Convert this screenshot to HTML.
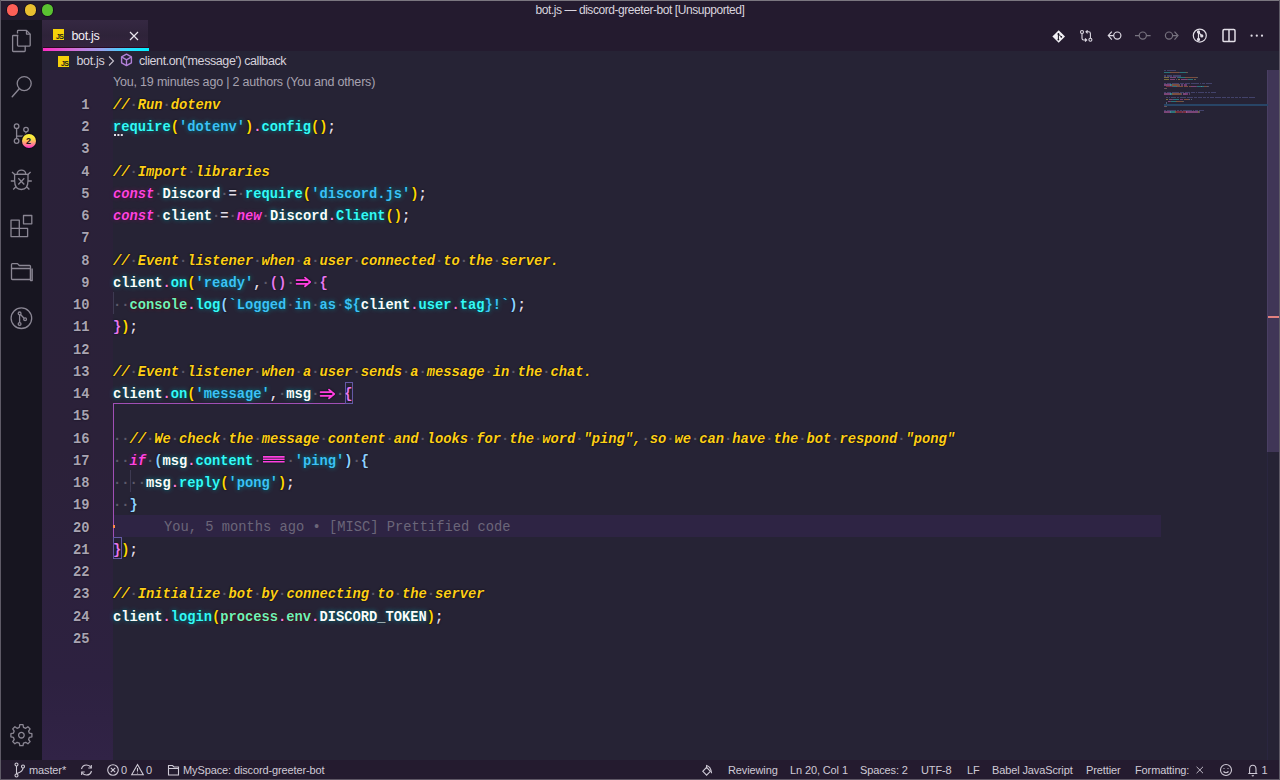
<!DOCTYPE html>
<html><head><meta charset="utf-8">
<style>
*{margin:0;padding:0;box-sizing:border-box}
html,body{width:1280px;height:780px;overflow:hidden;background:#262335;font-family:"Liberation Sans",sans-serif}
.abs{position:absolute}
svg{overflow:visible}
#title{left:0;top:0;width:1280px;height:51px;background:#241b2f}
#ttxt{left:0;top:3px;width:1280px;text-align:center;color:#d9d4de;font-size:12px;letter-spacing:-0.44px;line-height:14px}
.tl{width:11.4px;height:11.4px;border-radius:50%;top:4.3px;box-shadow:0 0 0 0.8px #150f1c}
#act{left:0;top:20px;width:42px;height:740px;background:#171520}
#tab{left:42px;top:20px;width:106px;height:31px;background:linear-gradient(#352842,#2e2339 50%,#36243f)}
#tabline{left:42.5px;top:48px;width:106px;height:3px;background:linear-gradient(90deg,#ff2ec4,#d070d8 30%,#9aa0ec 55%,#30dcff 80%,#00f0ff);box-shadow:0 -1px 0 #2a0a22}
.jsico{width:11px;height:11px;background:#f5d10a;color:#1a1a1a;font-size:7px;font-weight:bold;line-height:6px;text-align:right;padding-top:4.5px;padding-right:0.5px;letter-spacing:-0.5px}
#gutter{left:42px;top:70px;width:71px;height:690px;background:linear-gradient(#2a2139,#2b2139 55%,#2d2140 88%,#312346)}
#status{left:0;top:760px;width:1280px;height:20px;background:#241b2f}
.sb{position:absolute;top:760px;height:20px;line-height:20px;color:#cfcad6;font-size:11px;letter-spacing:-0.12px;white-space:pre}
.ln{position:absolute;left:42px;width:47.5px;height:22.25px;line-height:22.25px;text-align:right;font-family:"Liberation Mono",monospace;font-size:13.76px;font-weight:bold;color:#a9a4b2;text-shadow:0 0 2px #100c18}
.cl{position:absolute;left:113px;height:22.25px;line-height:22.25px;white-space:pre;font-family:"Liberation Mono",monospace;font-size:13.76px;font-weight:bold}
.cm{color:#fdcf17;font-style:italic;text-shadow:0 0 1px #0c0a14,0 0 2px #0c0a14}
.ws{color:#5d5a6a;text-shadow:none;font-style:normal;font-weight:bold}
.w{color:#fbfbfb;text-shadow:0 0 1px #00343a,0 0 2px #00464d,0 0 5px #03edf977}
.cy{color:#36f9f6;text-shadow:0 0 1px #00343a,0 0 2px #00464d,0 0 5px #03edf977}
.st{color:#3fc0f5;text-shadow:0 0 1px #00343a,0 0 2px #00464d,0 0 5px #03edf977}
.y{color:#ffd700;text-shadow:0 0 2px #0c0a14}
.pk{color:#ff44e0;font-style:italic;text-shadow:0 0 1px #100c0f,0 0 4px #dc078e66}
.pd{color:#ff7edb;text-shadow:0 0 2px #0c0a14}
.or{color:#e878f0;text-shadow:0 0 2px #0c0a14}
.lb{color:#8fd3ff;text-shadow:0 0 2px #0c0a14}
.gr{color:#72f1b8;text-shadow:0 0 1px #100c0f,0 0 2px #3a0a14,0 0 4px #fc1f2c55}
.sc{color:#e0dbe6;text-shadow:0 0 2px #0c0a14}
.sp{}
.ic{position:absolute}
.ic path,.ic circle,.ic rect,.ic line{vector-effect:non-scaling-stroke}
</style></head><body>
<!-- title bar -->
<div id="title" class="abs"></div>
<div class="abs" style="left:0;top:0;width:1280px;height:1px;background:#7b7780"></div>
<div id="ttxt" class="abs">bot.js — discord-greeter-bot [Unsupported]</div>
<div class="abs tl" style="left:6.6px;background:#fe5f57"></div>
<div class="abs tl" style="left:24.5px;background:#e9bf30"></div>
<div class="abs tl" style="left:42.1px;background:#5ac231"></div>

<!-- activity bar -->
<div id="act" class="abs"></div>
<svg class="ic" style="left:0;top:20px" width="42" height="740" viewBox="0 20 42 740">
 <g fill="none" stroke="#8a8693" stroke-width="1.3" stroke-linejoin="round">
  <!-- explorer -->
  <path d="M17.5 33.5V31.2Q17.5 30.4 18.3 30.4H26.5L30.2 34.1V45.3Q30.2 46.1 29.4 46.1H25.2"/>
  <path d="M26.5 30.4V34.1H30.2"/>
  <path d="M12.6 36.2Q12.6 35.5 13.3 35.5H17.5V45.3Q17.5 46.1 18.3 46.1H25.2V50.8Q25.2 51.5 24.5 51.5H13.3Q12.6 51.5 12.6 50.8Z"/>
  <path d="M17.5 35.5H18.3"/>
  <!-- search -->
  <circle cx="24.2" cy="83.6" r="7"/>
  <path d="M19.2 88.8L12.2 96.8" stroke-width="1.4" stroke-linecap="round"/>
  <!-- scm -->
  <circle cx="16.6" cy="126.2" r="2.3"/>
  <circle cx="26" cy="129.6" r="2.3"/>
  <circle cx="16.6" cy="141" r="2.3"/>
  <path d="M16.6 128.5V138.7M26 131.9V132.5Q26 136.2 21.5 136.2H16.6"/>
  <!-- debug -->
  <path d="M17.1 174.4A4.35 4.35 0 0 1 25.8 174.4Z"/>
  <path d="M14.6 174.4H28V180.5Q28 189.5 21.3 189.5Q14.6 189.5 14.6 180.5Z"/>
  <path d="M12 172L15.2 175M30.6 172L27.4 175M10.8 181H14.6M28 181H31.8M13.2 189.5L16.2 186.5M29.4 189.5L26.4 186.5"/>
  <path d="M18.3 178.3L24.3 184.5M24.3 178.3L18.3 184.5"/>
  <!-- extensions -->
  <path d="M11 220.2H19.3V236.6H11ZM11 228.4H27.6V236.6H19.3"/>
  <path d="M23.5 215.5H31.8V223.8H23.5Z"/>
  <!-- folder -->
  <path d="M11.5 264.5Q11.5 263.6 12.4 263.6H17.5L19.3 265.5H29.6Q30.5 265.5 30.5 266.4V278.6Q30.5 279.5 29.6 279.5H12.4Q11.5 279.5 11.5 278.6Z"/>
  <path d="M11.5 268.5H30.5M30.5 268.5V280.5H32.2V268.5"/>
  <!-- git graph -->
  <circle cx="21.4" cy="318.2" r="10.3"/>
  <circle cx="19.6" cy="313.4" r="1.4"/>
  <circle cx="19.6" cy="324" r="1.4"/>
  <circle cx="25.1" cy="319.3" r="1.4"/>
  <path d="M19.6 314.8V322.6M20.5 314.5L24.1 318.3"/>
  <!-- gear -->
  <g transform="translate(21.4 735.2)">
   <path d="M-1.6 -9.5H1.6L2.1 -6.9L4.3 -5.9L6.5 -7.5L8.7 -5.3L7.2 -3.1L8 -1L10.5 -0.5V2.6L8 3.1L7.2 5.3L8.7 7.4L6.5 9.6L4.3 8.1L2.1 9L1.6 11.5H-1.6L-2.1 9L-4.3 8.1L-6.5 9.6L-8.7 7.4L-7.2 5.3L-8 3.1L-10.5 2.6V-0.5L-8 -1L-7.2 -3.1L-8.7 -5.3L-6.5 -7.5L-4.3 -5.9L-2.1 -6.9Z" transform="translate(0 -1)"/>
   <circle cx="0" cy="0" r="2.8"/>
  </g>
 </g>
</svg>
<!-- scm badge -->
<div class="abs" style="left:21.5px;top:133.5px;width:14px;height:14px;border-radius:50%;background:linear-gradient(#f8f23c,#fbe040 35%,#ff8a8a 70%,#ff2ec4);box-shadow:0 0 0 1.2px #120e1a;color:#1a1320;font-size:9px;font-weight:bold;line-height:14px;text-align:center">2</div>

<!-- tab -->
<div id="tab" class="abs"></div>
<div id="tabline" class="abs"></div>
<div class="abs jsico" style="left:53px;top:29px">JS</div>
<div class="abs" style="left:71.5px;top:28px;color:#f3f0f5;font-size:12.5px;letter-spacing:-0.35px;line-height:16px">bot.js</div>
<svg class="abs" style="left:129px;top:31px" width="10" height="10"><path d="M1 1L9 9M9 1L1 9" stroke="#e9e6ee" stroke-width="1.2"/></svg>

<!-- editor toolbar icons -->
<svg class="abs" style="left:1040px;top:20px" width="240" height="31" viewBox="1040 20 240 31">
 <!-- git diamond -->
 <path d="M1058.7 30.2L1065 36.5L1058.7 42.8L1052.4 36.5Z" fill="#f2f0f5"/>
 <g stroke="#171320" stroke-width="1" fill="none"><path d="M1058.4 33.9V39.6M1058.4 34L1061.2 36.8"/></g>
 <g fill="#171320"><circle cx="1058.4" cy="33.9" r="0.9"/><circle cx="1058.4" cy="39.6" r="0.9"/><circle cx="1061.3" cy="36.8" r="0.9"/></g>
 <g fill="none" stroke="#dcd8e2" stroke-width="1.1">
  <!-- compare -->
  <circle cx="1082" cy="32" r="1.5"/><circle cx="1090.4" cy="39.8" r="1.5"/>
  <path d="M1082 33.5V38.2Q1082 40 1083.8 40H1086.5M1085 38.5L1086.7 40L1085 41.5M1090.4 38.3V33.6Q1090.4 31.8 1088.6 31.8H1086.2M1087.6 30.3L1086 31.8L1087.6 33.3"/>
  </g><g fill="none" stroke="#dcd8e2" stroke-width="1.2" transform="translate(0.8 -0.9)">
  <!-- prev change -->
  <circle cx="1116.5" cy="36.5" r="3.6"/>
  <path d="M1112.9 36.5H1108M1111 32.5L1107.5 36.5L1111 40.5"/>
 </g>
 <g fill="none" stroke="#77737f" stroke-width="1.2" transform="translate(0 -0.9)">
  <circle cx="1142.8" cy="36.5" r="3.6"/>
  <path d="M1135 36.5H1139.2M1146.4 36.5H1150.6"/>
  <circle cx="1169" cy="36.5" r="3.6"/>
  <path d="M1172.6 36.5H1177M1174.5 32.5L1178 36.5L1174.5 40.5"/>
 </g>
 <g fill="none" stroke="#e2dee7" stroke-width="1.2" transform="translate(0 -0.9)">
  <circle cx="1199.8" cy="36.5" r="6.5"/>
  <path d="M1198.5 32.5V40.5M1198.5 33L1201.5 36.5"/>
  <circle cx="1198.5" cy="32.8" r="1" fill="#e2dee7"/><circle cx="1198.5" cy="40.3" r="1" fill="#e2dee7"/><circle cx="1201.8" cy="36.8" r="1" fill="#e2dee7"/>
  <rect x="1223" y="30.5" width="12" height="12" rx="1.2" stroke-width="1.5"/>
  <path d="M1229 30.5V42.5" stroke-width="1.5"/>
 </g>
 <g fill="#e2dee7"><circle cx="1251.6" cy="35.7" r="1.1"/><circle cx="1256.8" cy="35.7" r="1.1"/><circle cx="1262" cy="35.7" r="1.1"/></g>
</svg>

<!-- breadcrumb -->
<div class="abs jsico" style="left:58px;top:56px">JS</div>
<div class="abs" style="left:76.5px;top:53px;color:#d6d2dc;font-size:12.5px;letter-spacing:-0.35px;line-height:16px">bot.js</div>
<svg class="abs" style="left:107px;top:55px" width="8" height="12"><path d="M2 1.5L6.5 6L2 10.5" stroke="#c9c5cf" stroke-width="1.1" fill="none"/></svg>
<svg class="abs" style="left:119px;top:53.3px" width="15" height="15" viewBox="0 0 15 15"><g fill="none" stroke="#b180d7" stroke-width="1.4" stroke-linejoin="round"><path d="M7.5 1.2L12.4 3.9V9.8L7.5 12.6L2.6 9.8V3.9Z"/><path d="M2.6 3.9L7.5 6.8L12.4 3.9M7.5 6.8V12.6"/></g></svg>
<div class="abs" style="left:139px;top:53px;color:#d6d2dc;font-size:12.5px;letter-spacing:-0.41px;line-height:16px">client.on('message') callback</div>

<!-- gutter -->
<div id="gutter" class="abs"></div>

<!-- codelens -->
<div class="abs" style="left:113px;top:74px;color:#a7a2b0;font-size:12.5px;line-height:16px;letter-spacing:-0.19px">You, 19 minutes ago | 2 authors (You and others)</div>

<!-- line 20 highlight -->
<div class="abs" style="left:114px;top:515px;width:1047px;height:22px;background:#2e2444"></div>
<div class="abs" style="left:164px;top:517px;height:22.25px;line-height:22.25px;font-family:'Liberation Mono',monospace;font-size:13.76px;color:#6b6679;white-space:pre">You, 5 months ago • [MISC] Prettified code</div>

<!-- indent guides -->
<div class="abs" style="left:113px;top:292px;width:1px;height:22px;background:#3e3a52"></div>
<div class="abs" style="left:130px;top:470px;width:1px;height:22px;background:#3e3a52"></div>
<!-- bracket pair guide -->
<div class="abs" style="left:113px;top:403px;width:232px;height:1px;background:#a04fb5"></div>
<div class="abs" style="left:113px;top:403px;width:1px;height:134px;background:#a04fb5"></div>
<!-- bracket match boxes -->
<div class="abs" style="left:344.5px;top:381.5px;width:8px;height:22.5px;border:1px solid #6559a6"></div>
<div class="abs" style="left:113px;top:537px;width:8.5px;height:22px;border:1px solid #6559a6"></div>
<!-- cursor mark -->
<div class="abs" style="left:113px;top:524.5px;width:2px;height:3px;background:#ff8b4a"></div>
<!-- hint dots under require -->
<div class="abs" style="left:113.8px;top:134.3px;width:1.8px;height:1.8px;background:#e6e2ea;box-shadow:3.4px 0 #e6e2ea,6.8px 0 #e6e2ea"></div>

<div class="ln" style="top:94.75px">1</div>
<div class="cl" style="top:94.75px"><span class="cm">//<span class="ws">·</span>Run<span class="ws">·</span>dotenv</span></div>
<div class="ln" style="top:117.00px">2</div>
<div class="cl" style="top:117.00px"><span class="cy">require</span><span class="y">(</span><span class="st">'dotenv'</span><span class="y">)</span><span class="pd">.</span><span class="cy">config</span><span class="y">()</span><span class="sc">;</span></div>
<div class="ln" style="top:139.25px">3</div>
<div class="ln" style="top:161.50px">4</div>
<div class="cl" style="top:161.50px"><span class="cm">//<span class="ws">·</span>Import<span class="ws">·</span>libraries</span></div>
<div class="ln" style="top:183.75px">5</div>
<div class="cl" style="top:183.75px"><span class="pk">const</span><span class="ws">·</span><span class="w">Discord</span><span class="ws">·</span><span class="sc">=</span><span class="ws">·</span><span class="cy">require</span><span class="y">(</span><span class="st">'discord.js'</span><span class="y">)</span><span class="sc">;</span></div>
<div class="ln" style="top:206.00px">6</div>
<div class="cl" style="top:206.00px"><span class="pk">const</span><span class="ws">·</span><span class="w">client</span><span class="ws">·</span><span class="sc">=</span><span class="ws">·</span><span class="pk">new</span><span class="ws">·</span><span class="w">Discord</span><span class="pd">.</span><span class="cy">Client</span><span class="y">()</span><span class="sc">;</span></div>
<div class="ln" style="top:228.25px">7</div>
<div class="ln" style="top:250.50px">8</div>
<div class="cl" style="top:250.50px"><span class="cm">//<span class="ws">·</span>Event<span class="ws">·</span>listener<span class="ws">·</span>when<span class="ws">·</span>a<span class="ws">·</span>user<span class="ws">·</span>connected<span class="ws">·</span>to<span class="ws">·</span>the<span class="ws">·</span>server.</span></div>
<div class="ln" style="top:272.75px">9</div>
<div class="cl" style="top:272.75px"><span class="w">client</span><span class="pd">.</span><span class="cy">on</span><span class="y">(</span><span class="st">'ready'</span><span class="sc">,</span><span class="ws">·</span><span class="or">()</span><span class="ws">·</span><span class="sp">  </span><span class="ws">·</span><span class="or">{</span></div>
<svg class="abs" style="left:294.63px;top:270.25px;filter:drop-shadow(0 0 1px #0a0610)" width="17" height="22" viewBox="0 0 17 22"><g stroke="#ff3fe0" stroke-width="1.8" fill="none" stroke-linecap="round" stroke-linejoin="round"><path d="M1.6 10.05H13M1.6 13.85H13M10 7.6L15.2 11.95L10 16.3"/></g></svg>
<div class="ln" style="top:295.00px">10</div>
<div class="cl" style="top:295.00px"><span class="ws">··</span><span class="gr">console</span><span class="pd">.</span><span class="cy">log</span><span class="lb">(</span><span class="st">`Logged</span><span class="ws">·</span><span class="st">in</span><span class="ws">·</span><span class="st">as</span><span class="ws">·</span><span class="st">${</span><span class="w">client</span><span class="pd">.</span><span class="cy">user</span><span class="pd">.</span><span class="cy">tag</span><span class="st">}!`</span><span class="lb">)</span><span class="sc">;</span></div>
<div class="ln" style="top:317.25px">11</div>
<div class="cl" style="top:317.25px"><span class="or">}</span><span class="y">)</span><span class="sc">;</span></div>
<div class="ln" style="top:339.50px">12</div>
<div class="ln" style="top:361.75px">13</div>
<div class="cl" style="top:361.75px"><span class="cm">//<span class="ws">·</span>Event<span class="ws">·</span>listener<span class="ws">·</span>when<span class="ws">·</span>a<span class="ws">·</span>user<span class="ws">·</span>sends<span class="ws">·</span>a<span class="ws">·</span>message<span class="ws">·</span>in<span class="ws">·</span>the<span class="ws">·</span>chat.</span></div>
<div class="ln" style="top:384.00px">14</div>
<div class="cl" style="top:384.00px"><span class="w">client</span><span class="pd">.</span><span class="cy">on</span><span class="y">(</span><span class="st">'message'</span><span class="sc">,</span><span class="ws">·</span><span class="w">msg</span><span class="ws">·</span><span class="sp">  </span><span class="ws">·</span><span class="or">{</span></div>
<svg class="abs" style="left:319.40px;top:381.50px;filter:drop-shadow(0 0 1px #0a0610)" width="17" height="22" viewBox="0 0 17 22"><g stroke="#ff3fe0" stroke-width="1.8" fill="none" stroke-linecap="round" stroke-linejoin="round"><path d="M1.6 10.05H13M1.6 13.85H13M10 7.6L15.2 11.95L10 16.3"/></g></svg>
<div class="ln" style="top:406.25px">15</div>
<div class="ln" style="top:428.50px">16</div>
<div class="cl" style="top:428.50px"><span class="ws">··</span><span class="cm">//<span class="ws">·</span>We<span class="ws">·</span>check<span class="ws">·</span>the<span class="ws">·</span>message<span class="ws">·</span>content<span class="ws">·</span>and<span class="ws">·</span>looks<span class="ws">·</span>for<span class="ws">·</span>the<span class="ws">·</span>word<span class="ws">·</span>"ping",<span class="ws">·</span>so<span class="ws">·</span>we<span class="ws">·</span>can<span class="ws">·</span>have<span class="ws">·</span>the<span class="ws">·</span>bot<span class="ws">·</span>respond<span class="ws">·</span>"pong"</span></div>
<div class="ln" style="top:450.75px">17</div>
<div class="cl" style="top:450.75px"><span class="ws">··</span><span class="pk">if</span><span class="ws">·</span><span class="lb">(</span><span class="w">msg</span><span class="pd">.</span><span class="cy">content</span><span class="ws">·</span><span class="sp">   </span><span class="ws">·</span><span class="st">'ping'</span><span class="lb">)</span><span class="ws">·</span><span class="lb">{</span></div>
<svg class="abs" style="left:261.61px;top:448.25px;filter:drop-shadow(0 0 1px #001a14)" width="25" height="22" viewBox="0 0 25 22"><g stroke="#ff3fe0" stroke-width="1.6" fill="none"><path d="M1 8.9H22.6M1 11.3H22.6M1 13.7H22.6"/></g></svg>
<div class="ln" style="top:473.00px">18</div>
<div class="cl" style="top:473.00px"><span class="ws">····</span><span class="w">msg</span><span class="pd">.</span><span class="cy">reply</span><span class="y">(</span><span class="st">'pong'</span><span class="y">)</span><span class="sc">;</span></div>
<div class="ln" style="top:495.25px">19</div>
<div class="cl" style="top:495.25px"><span class="ws">··</span><span class="lb">}</span></div>
<div class="ln" style="top:517.50px">20</div>
<div class="ln" style="top:539.75px">21</div>
<div class="cl" style="top:539.75px"><span class="or">}</span><span class="y">)</span><span class="sc">;</span></div>
<div class="ln" style="top:562.00px">22</div>
<div class="ln" style="top:584.25px">23</div>
<div class="cl" style="top:584.25px"><span class="cm">//<span class="ws">·</span>Initialize<span class="ws">·</span>bot<span class="ws">·</span>by<span class="ws">·</span>connecting<span class="ws">·</span>to<span class="ws">·</span>the<span class="ws">·</span>server</span></div>
<div class="ln" style="top:606.50px">24</div>
<div class="cl" style="top:606.50px"><span class="w">client</span><span class="pd">.</span><span class="cy">login</span><span class="y">(</span><span class="gr">process</span><span class="pd">.</span><span class="gr">env</span><span class="pd">.</span><span class="w">DISCORD_TOKEN</span><span class="y">)</span><span class="sc">;</span></div>
<div class="ln" style="top:628.75px">25</div>

<!-- minimap + scrollbar -->
<div class="abs" style="left:1164.30px;top:70.00px;width:1.77px;height:1.2px;background:#5d61a0;opacity:.5"></div>
<div class="abs" style="left:1166.95px;top:70.00px;width:2.66px;height:1.2px;background:#5d61a0;opacity:.5"></div>
<div class="abs" style="left:1170.49px;top:70.00px;width:5.31px;height:1.2px;background:#5d61a0;opacity:.5"></div>
<div class="abs" style="left:1164.30px;top:71.80px;width:6.20px;height:1.2px;background:#2fc4c2;opacity:.5"></div>
<div class="abs" style="left:1170.49px;top:71.80px;width:0.89px;height:1.2px;background:#b9a24a;opacity:.5"></div>
<div class="abs" style="left:1171.38px;top:71.80px;width:7.08px;height:1.2px;background:#d07a4c;opacity:.5"></div>
<div class="abs" style="left:1178.46px;top:71.80px;width:0.89px;height:1.2px;background:#b9a24a;opacity:.5"></div>
<div class="abs" style="left:1179.35px;top:71.80px;width:0.89px;height:1.2px;background:#b0609a;opacity:.5"></div>
<div class="abs" style="left:1180.23px;top:71.80px;width:5.31px;height:1.2px;background:#2fc4c2;opacity:.5"></div>
<div class="abs" style="left:1185.54px;top:71.80px;width:1.77px;height:1.2px;background:#b9a24a;opacity:.5"></div>
<div class="abs" style="left:1187.31px;top:71.80px;width:0.89px;height:1.2px;background:#8a8596;opacity:.5"></div>
<div class="abs" style="left:1164.30px;top:75.40px;width:1.77px;height:1.2px;background:#5d61a0;opacity:.5"></div>
<div class="abs" style="left:1166.95px;top:75.40px;width:5.31px;height:1.2px;background:#5d61a0;opacity:.5"></div>
<div class="abs" style="left:1173.15px;top:75.40px;width:7.96px;height:1.2px;background:#5d61a0;opacity:.5"></div>
<div class="abs" style="left:1164.30px;top:77.20px;width:4.42px;height:1.2px;background:#cdb34c;opacity:.5"></div>
<div class="abs" style="left:1169.61px;top:77.20px;width:6.20px;height:1.2px;background:#d06abb;opacity:.5"></div>
<div class="abs" style="left:1176.69px;top:77.20px;width:0.89px;height:1.2px;background:#8a8596;opacity:.5"></div>
<div class="abs" style="left:1178.46px;top:77.20px;width:6.20px;height:1.2px;background:#2fc4c2;opacity:.5"></div>
<div class="abs" style="left:1184.65px;top:77.20px;width:0.89px;height:1.2px;background:#b9a24a;opacity:.5"></div>
<div class="abs" style="left:1185.54px;top:77.20px;width:10.62px;height:1.2px;background:#d07a4c;opacity:.5"></div>
<div class="abs" style="left:1196.16px;top:77.20px;width:0.89px;height:1.2px;background:#b9a24a;opacity:.5"></div>
<div class="abs" style="left:1197.04px;top:77.20px;width:0.89px;height:1.2px;background:#8a8596;opacity:.5"></div>
<div class="abs" style="left:1164.30px;top:79.00px;width:4.42px;height:1.2px;background:#cdb34c;opacity:.5"></div>
<div class="abs" style="left:1169.61px;top:79.00px;width:5.31px;height:1.2px;background:#d06abb;opacity:.5"></div>
<div class="abs" style="left:1175.81px;top:79.00px;width:0.89px;height:1.2px;background:#8a8596;opacity:.5"></div>
<div class="abs" style="left:1177.58px;top:79.00px;width:2.66px;height:1.2px;background:#cdb34c;opacity:.5"></div>
<div class="abs" style="left:1181.12px;top:79.00px;width:6.20px;height:1.2px;background:#d06abb;opacity:.5"></div>
<div class="abs" style="left:1187.31px;top:79.00px;width:0.89px;height:1.2px;background:#b0609a;opacity:.5"></div>
<div class="abs" style="left:1188.19px;top:79.00px;width:5.31px;height:1.2px;background:#2fc4c2;opacity:.5"></div>
<div class="abs" style="left:1193.50px;top:79.00px;width:1.77px;height:1.2px;background:#b9a24a;opacity:.5"></div>
<div class="abs" style="left:1195.27px;top:79.00px;width:0.89px;height:1.2px;background:#8a8596;opacity:.5"></div>
<div class="abs" style="left:1164.30px;top:82.60px;width:1.77px;height:1.2px;background:#5d61a0;opacity:.5"></div>
<div class="abs" style="left:1166.95px;top:82.60px;width:4.42px;height:1.2px;background:#5d61a0;opacity:.5"></div>
<div class="abs" style="left:1172.26px;top:82.60px;width:7.08px;height:1.2px;background:#5d61a0;opacity:.5"></div>
<div class="abs" style="left:1180.23px;top:82.60px;width:3.54px;height:1.2px;background:#5d61a0;opacity:.5"></div>
<div class="abs" style="left:1184.65px;top:82.60px;width:0.89px;height:1.2px;background:#5d61a0;opacity:.5"></div>
<div class="abs" style="left:1186.42px;top:82.60px;width:3.54px;height:1.2px;background:#5d61a0;opacity:.5"></div>
<div class="abs" style="left:1190.85px;top:82.60px;width:7.96px;height:1.2px;background:#5d61a0;opacity:.5"></div>
<div class="abs" style="left:1199.70px;top:82.60px;width:1.77px;height:1.2px;background:#5d61a0;opacity:.5"></div>
<div class="abs" style="left:1202.36px;top:82.60px;width:2.66px;height:1.2px;background:#5d61a0;opacity:.5"></div>
<div class="abs" style="left:1205.89px;top:82.60px;width:6.20px;height:1.2px;background:#5d61a0;opacity:.5"></div>
<div class="abs" style="left:1164.30px;top:84.40px;width:5.31px;height:1.2px;background:#d06abb;opacity:.5"></div>
<div class="abs" style="left:1169.61px;top:84.40px;width:0.89px;height:1.2px;background:#b0609a;opacity:.5"></div>
<div class="abs" style="left:1170.49px;top:84.40px;width:1.77px;height:1.2px;background:#2fc4c2;opacity:.5"></div>
<div class="abs" style="left:1172.26px;top:84.40px;width:0.89px;height:1.2px;background:#b9a24a;opacity:.5"></div>
<div class="abs" style="left:1173.15px;top:84.40px;width:6.20px;height:1.2px;background:#d07a4c;opacity:.5"></div>
<div class="abs" style="left:1179.35px;top:84.40px;width:0.89px;height:1.2px;background:#8a8596;opacity:.5"></div>
<div class="abs" style="left:1181.12px;top:84.40px;width:1.77px;height:1.2px;background:#a060a8;opacity:.5"></div>
<div class="abs" style="left:1183.77px;top:84.40px;width:1.77px;height:1.2px;background:#c050b0;opacity:.5"></div>
<div class="abs" style="left:1186.42px;top:84.40px;width:0.89px;height:1.2px;background:#a060a8;opacity:.5"></div>
<div class="abs" style="left:1166.07px;top:86.20px;width:6.20px;height:1.2px;background:#c43a48;opacity:.5"></div>
<div class="abs" style="left:1172.26px;top:86.20px;width:0.89px;height:1.2px;background:#b0609a;opacity:.5"></div>
<div class="abs" style="left:1173.15px;top:86.20px;width:2.66px;height:1.2px;background:#2fc4c2;opacity:.5"></div>
<div class="abs" style="left:1175.81px;top:86.20px;width:0.89px;height:1.2px;background:#7aa0c0;opacity:.5"></div>
<div class="abs" style="left:1176.69px;top:86.20px;width:6.20px;height:1.2px;background:#d07a4c;opacity:.5"></div>
<div class="abs" style="left:1183.77px;top:86.20px;width:1.77px;height:1.2px;background:#d07a4c;opacity:.5"></div>
<div class="abs" style="left:1186.42px;top:86.20px;width:1.77px;height:1.2px;background:#d07a4c;opacity:.5"></div>
<div class="abs" style="left:1189.08px;top:86.20px;width:1.77px;height:1.2px;background:#d07a4c;opacity:.5"></div>
<div class="abs" style="left:1190.85px;top:86.20px;width:5.31px;height:1.2px;background:#d06abb;opacity:.5"></div>
<div class="abs" style="left:1196.16px;top:86.20px;width:0.89px;height:1.2px;background:#b0609a;opacity:.5"></div>
<div class="abs" style="left:1197.04px;top:86.20px;width:3.54px;height:1.2px;background:#2fc4c2;opacity:.5"></div>
<div class="abs" style="left:1200.59px;top:86.20px;width:0.89px;height:1.2px;background:#b0609a;opacity:.5"></div>
<div class="abs" style="left:1201.47px;top:86.20px;width:2.66px;height:1.2px;background:#2fc4c2;opacity:.5"></div>
<div class="abs" style="left:1204.12px;top:86.20px;width:2.66px;height:1.2px;background:#d07a4c;opacity:.5"></div>
<div class="abs" style="left:1206.78px;top:86.20px;width:0.89px;height:1.2px;background:#7aa0c0;opacity:.5"></div>
<div class="abs" style="left:1207.66px;top:86.20px;width:0.89px;height:1.2px;background:#8a8596;opacity:.5"></div>
<div class="abs" style="left:1164.30px;top:88.00px;width:0.89px;height:1.2px;background:#a060a8;opacity:.5"></div>
<div class="abs" style="left:1165.18px;top:88.00px;width:0.89px;height:1.2px;background:#b9a24a;opacity:.5"></div>
<div class="abs" style="left:1166.07px;top:88.00px;width:0.89px;height:1.2px;background:#8a8596;opacity:.5"></div>
<div class="abs" style="left:1164.30px;top:91.60px;width:1.77px;height:1.2px;background:#5d61a0;opacity:.5"></div>
<div class="abs" style="left:1166.95px;top:91.60px;width:4.42px;height:1.2px;background:#5d61a0;opacity:.5"></div>
<div class="abs" style="left:1172.26px;top:91.60px;width:7.08px;height:1.2px;background:#5d61a0;opacity:.5"></div>
<div class="abs" style="left:1180.23px;top:91.60px;width:3.54px;height:1.2px;background:#5d61a0;opacity:.5"></div>
<div class="abs" style="left:1184.65px;top:91.60px;width:0.89px;height:1.2px;background:#5d61a0;opacity:.5"></div>
<div class="abs" style="left:1186.42px;top:91.60px;width:3.54px;height:1.2px;background:#5d61a0;opacity:.5"></div>
<div class="abs" style="left:1190.85px;top:91.60px;width:4.42px;height:1.2px;background:#5d61a0;opacity:.5"></div>
<div class="abs" style="left:1196.16px;top:91.60px;width:0.89px;height:1.2px;background:#5d61a0;opacity:.5"></div>
<div class="abs" style="left:1197.93px;top:91.60px;width:6.20px;height:1.2px;background:#5d61a0;opacity:.5"></div>
<div class="abs" style="left:1205.01px;top:91.60px;width:1.77px;height:1.2px;background:#5d61a0;opacity:.5"></div>
<div class="abs" style="left:1207.66px;top:91.60px;width:2.66px;height:1.2px;background:#5d61a0;opacity:.5"></div>
<div class="abs" style="left:1211.20px;top:91.60px;width:4.42px;height:1.2px;background:#5d61a0;opacity:.5"></div>
<div class="abs" style="left:1164.30px;top:93.40px;width:5.31px;height:1.2px;background:#d06abb;opacity:.5"></div>
<div class="abs" style="left:1169.61px;top:93.40px;width:0.89px;height:1.2px;background:#b0609a;opacity:.5"></div>
<div class="abs" style="left:1170.49px;top:93.40px;width:1.77px;height:1.2px;background:#2fc4c2;opacity:.5"></div>
<div class="abs" style="left:1172.26px;top:93.40px;width:0.89px;height:1.2px;background:#b9a24a;opacity:.5"></div>
<div class="abs" style="left:1173.15px;top:93.40px;width:7.96px;height:1.2px;background:#d07a4c;opacity:.5"></div>
<div class="abs" style="left:1181.12px;top:93.40px;width:0.89px;height:1.2px;background:#8a8596;opacity:.5"></div>
<div class="abs" style="left:1182.88px;top:93.40px;width:2.66px;height:1.2px;background:#d06abb;opacity:.5"></div>
<div class="abs" style="left:1186.42px;top:93.40px;width:1.77px;height:1.2px;background:#c050b0;opacity:.5"></div>
<div class="abs" style="left:1189.08px;top:93.40px;width:0.89px;height:1.2px;background:#a060a8;opacity:.5"></div>
<div class="abs" style="left:1166.07px;top:97.00px;width:1.77px;height:1.2px;background:#5d61a0;opacity:.5"></div>
<div class="abs" style="left:1168.72px;top:97.00px;width:1.77px;height:1.2px;background:#5d61a0;opacity:.5"></div>
<div class="abs" style="left:1171.38px;top:97.00px;width:4.42px;height:1.2px;background:#5d61a0;opacity:.5"></div>
<div class="abs" style="left:1176.69px;top:97.00px;width:2.66px;height:1.2px;background:#5d61a0;opacity:.5"></div>
<div class="abs" style="left:1180.23px;top:97.00px;width:6.20px;height:1.2px;background:#5d61a0;opacity:.5"></div>
<div class="abs" style="left:1187.31px;top:97.00px;width:6.20px;height:1.2px;background:#5d61a0;opacity:.5"></div>
<div class="abs" style="left:1194.39px;top:97.00px;width:2.66px;height:1.2px;background:#5d61a0;opacity:.5"></div>
<div class="abs" style="left:1197.93px;top:97.00px;width:4.42px;height:1.2px;background:#5d61a0;opacity:.5"></div>
<div class="abs" style="left:1203.24px;top:97.00px;width:2.66px;height:1.2px;background:#5d61a0;opacity:.5"></div>
<div class="abs" style="left:1206.78px;top:97.00px;width:2.66px;height:1.2px;background:#5d61a0;opacity:.5"></div>
<div class="abs" style="left:1210.32px;top:97.00px;width:3.54px;height:1.2px;background:#5d61a0;opacity:.5"></div>
<div class="abs" style="left:1214.74px;top:97.00px;width:6.20px;height:1.2px;background:#5d61a0;opacity:.5"></div>
<div class="abs" style="left:1221.83px;top:97.00px;width:1.77px;height:1.2px;background:#5d61a0;opacity:.5"></div>
<div class="abs" style="left:1224.48px;top:97.00px;width:1.77px;height:1.2px;background:#5d61a0;opacity:.5"></div>
<div class="abs" style="left:1227.13px;top:97.00px;width:2.66px;height:1.2px;background:#5d61a0;opacity:.5"></div>
<div class="abs" style="left:1230.67px;top:97.00px;width:3.54px;height:1.2px;background:#5d61a0;opacity:.5"></div>
<div class="abs" style="left:1235.10px;top:97.00px;width:2.66px;height:1.2px;background:#5d61a0;opacity:.5"></div>
<div class="abs" style="left:1238.64px;top:97.00px;width:2.66px;height:1.2px;background:#5d61a0;opacity:.5"></div>
<div class="abs" style="left:1242.18px;top:97.00px;width:6.20px;height:1.2px;background:#5d61a0;opacity:.5"></div>
<div class="abs" style="left:1249.26px;top:97.00px;width:5.31px;height:1.2px;background:#5d61a0;opacity:.5"></div>
<div class="abs" style="left:1166.07px;top:98.80px;width:1.77px;height:1.2px;background:#cdb34c;opacity:.5"></div>
<div class="abs" style="left:1168.72px;top:98.80px;width:0.89px;height:1.2px;background:#7aa0c0;opacity:.5"></div>
<div class="abs" style="left:1169.61px;top:98.80px;width:2.66px;height:1.2px;background:#d06abb;opacity:.5"></div>
<div class="abs" style="left:1172.26px;top:98.80px;width:0.89px;height:1.2px;background:#b0609a;opacity:.5"></div>
<div class="abs" style="left:1173.15px;top:98.80px;width:6.20px;height:1.2px;background:#2fc4c2;opacity:.5"></div>
<div class="abs" style="left:1180.23px;top:98.80px;width:2.66px;height:1.2px;background:#c050b0;opacity:.5"></div>
<div class="abs" style="left:1183.77px;top:98.80px;width:5.31px;height:1.2px;background:#d07a4c;opacity:.5"></div>
<div class="abs" style="left:1189.08px;top:98.80px;width:0.89px;height:1.2px;background:#7aa0c0;opacity:.5"></div>
<div class="abs" style="left:1190.85px;top:98.80px;width:0.89px;height:1.2px;background:#7aa0c0;opacity:.5"></div>
<div class="abs" style="left:1167.84px;top:100.60px;width:2.66px;height:1.2px;background:#d06abb;opacity:.5"></div>
<div class="abs" style="left:1170.49px;top:100.60px;width:0.89px;height:1.2px;background:#b0609a;opacity:.5"></div>
<div class="abs" style="left:1171.38px;top:100.60px;width:4.42px;height:1.2px;background:#2fc4c2;opacity:.5"></div>
<div class="abs" style="left:1175.81px;top:100.60px;width:0.89px;height:1.2px;background:#b9a24a;opacity:.5"></div>
<div class="abs" style="left:1176.69px;top:100.60px;width:5.31px;height:1.2px;background:#d07a4c;opacity:.5"></div>
<div class="abs" style="left:1182.00px;top:100.60px;width:0.89px;height:1.2px;background:#b9a24a;opacity:.5"></div>
<div class="abs" style="left:1182.88px;top:100.60px;width:0.89px;height:1.2px;background:#8a8596;opacity:.5"></div>
<div class="abs" style="left:1166.07px;top:102.40px;width:0.89px;height:1.2px;background:#7aa0c0;opacity:.5"></div>
<div class="abs" style="left:1164.30px;top:106.00px;width:0.89px;height:1.2px;background:#a060a8;opacity:.5"></div>
<div class="abs" style="left:1165.18px;top:106.00px;width:0.89px;height:1.2px;background:#b9a24a;opacity:.5"></div>
<div class="abs" style="left:1166.07px;top:106.00px;width:0.89px;height:1.2px;background:#8a8596;opacity:.5"></div>
<div class="abs" style="left:1164.30px;top:109.60px;width:1.77px;height:1.2px;background:#5d61a0;opacity:.5"></div>
<div class="abs" style="left:1166.95px;top:109.60px;width:8.85px;height:1.2px;background:#5d61a0;opacity:.5"></div>
<div class="abs" style="left:1176.69px;top:109.60px;width:2.66px;height:1.2px;background:#5d61a0;opacity:.5"></div>
<div class="abs" style="left:1180.23px;top:109.60px;width:1.77px;height:1.2px;background:#5d61a0;opacity:.5"></div>
<div class="abs" style="left:1182.88px;top:109.60px;width:8.85px;height:1.2px;background:#5d61a0;opacity:.5"></div>
<div class="abs" style="left:1192.62px;top:109.60px;width:1.77px;height:1.2px;background:#5d61a0;opacity:.5"></div>
<div class="abs" style="left:1195.27px;top:109.60px;width:2.66px;height:1.2px;background:#5d61a0;opacity:.5"></div>
<div class="abs" style="left:1198.82px;top:109.60px;width:5.31px;height:1.2px;background:#5d61a0;opacity:.5"></div>
<div class="abs" style="left:1164.30px;top:111.40px;width:5.31px;height:1.2px;background:#d06abb;opacity:.5"></div>
<div class="abs" style="left:1169.61px;top:111.40px;width:0.89px;height:1.2px;background:#b0609a;opacity:.5"></div>
<div class="abs" style="left:1170.49px;top:111.40px;width:4.42px;height:1.2px;background:#2fc4c2;opacity:.5"></div>
<div class="abs" style="left:1174.92px;top:111.40px;width:0.89px;height:1.2px;background:#b9a24a;opacity:.5"></div>
<div class="abs" style="left:1175.81px;top:111.40px;width:6.20px;height:1.2px;background:#c43a48;opacity:.5"></div>
<div class="abs" style="left:1182.00px;top:111.40px;width:0.89px;height:1.2px;background:#b0609a;opacity:.5"></div>
<div class="abs" style="left:1182.88px;top:111.40px;width:2.66px;height:1.2px;background:#c43a48;opacity:.5"></div>
<div class="abs" style="left:1185.54px;top:111.40px;width:0.89px;height:1.2px;background:#b0609a;opacity:.5"></div>
<div class="abs" style="left:1186.42px;top:111.40px;width:11.51px;height:1.2px;background:#d06abb;opacity:.5"></div>
<div class="abs" style="left:1197.93px;top:111.40px;width:0.89px;height:1.2px;background:#b9a24a;opacity:.5"></div>
<div class="abs" style="left:1198.82px;top:111.40px;width:0.89px;height:1.2px;background:#8a8596;opacity:.5"></div>
<div class="abs" style="left:1267.3px;top:70px;width:11.5px;height:382px;background:#403657;border-left:1px solid #4a3f64"></div>
<div class="abs" style="left:1164px;top:104.3px;width:103.5px;height:1.6px;background:#284566"></div>
<div class="abs" style="left:1268px;top:315.5px;width:11px;height:2px;background:#e2807f"></div>
<div class="abs" style="left:1279px;top:0;width:1px;height:780px;background:#5e5a66"></div>
<div class="abs" style="left:0;top:0;width:1px;height:780px;background:#5e5a66"></div>

<div class="abs" style="left:1267px;top:452px;width:1px;height:308px;background:#2a2640"></div>

<!-- status bar -->
<div id="status" class="abs"></div>
<svg class="abs" style="left:0;top:760px" width="1280" height="20" viewBox="0 760 1280 20">
 <g fill="none" stroke="#cfcad6" stroke-width="1.1">
  <!-- branch -->
  <circle cx="16.5" cy="764.5" r="1.5"/><circle cx="16.5" cy="775.5" r="1.5"/><circle cx="23" cy="766.5" r="1.5"/>
  <path d="M16.5 766V774M23 768Q23 771.5 17 773.5"/>
  <!-- sync -->
  <path d="M81.5 769Q82.5 765 86.5 765Q89.5 765 91 767.5M91.5 771Q90.5 775 86.5 775Q83.5 775 82 772.5"/>
  <path d="M91.3 765V768H88.3M81.7 775V772H84.7"/>
  <!-- error -->
  <circle cx="113" cy="770" r="5.3"/>
  <path d="M110.8 767.8L115.2 772.2M115.2 767.8L110.8 772.2"/>
  <!-- warning -->
  <path d="M137.5 764.5L143.3 774.8H131.7Z"/>
  <path d="M137.5 768V771.5M137.5 772.8V773.6"/>
  <!-- folder -->
  <path d="M168.5 765.5H172.5L174 767H178.5V775H168.5ZM168.5 768.5H178.5"/>
  <!-- feedback person -->
  <path d="M706.6 767.4L710.4 771.3L706.6 775.1L702.8 771.3Z"/><path d="M706.6 768.5V765.5Q710.8 766.5 711.6 773.2"/>
  <!-- smiley -->
  <circle cx="1226" cy="770" r="5.5"/>
  <path d="M1223.5 771.5Q1226 774 1228.5 771.5"/>
  <!-- bell -->
  <path d="M1249.6 773.5V769.2Q1249.6 765.2 1252.8 765.2Q1256 765.2 1256 769.2V773.5M1248.3 773.5H1257.3M1251.8 775.3Q1252.8 776.3 1253.8 775.3"/>
  <!-- formatting x -->
  <path d="M1196.6 766.8L1203 773.2M1203 766.8L1196.6 773.2" stroke-width="0.9"/>
 </g>
 <g fill="#cfcad6"><circle cx="1224" cy="768.5" r="0.6"/><circle cx="1228" cy="768.5" r="0.6"/></g>
</svg>
<div class="sb" style="left:29px">master*</div>
<div class="sb" style="left:121px">0</div>
<div class="sb" style="left:146px">0</div>
<div class="sb" style="left:183px">MySpace: discord-greeter-bot</div>
<div class="sb" style="left:728px">Reviewing</div>
<div class="sb" style="left:790px">Ln 20, Col 1</div>
<div class="sb" style="left:860px">Spaces: 2</div>
<div class="sb" style="left:921px">UTF-8</div>
<div class="sb" style="left:967px">LF</div>
<div class="sb" style="left:992px">Babel JavaScript</div>
<div class="sb" style="left:1086px">Prettier</div>
<div class="sb" style="left:1135px">Formatting:</div>
<div class="sb" style="left:1261.5px">1</div>
<div class="abs" style="left:0;top:779px;width:1280px;height:1px;background:#5f5866"></div>
<div class="abs" style="left:0;top:760px;width:1px;height:20px;background:#5e5a66"></div>
<div class="abs" style="left:1279px;top:760px;width:1px;height:20px;background:#5e5a66"></div>
</body></html>
